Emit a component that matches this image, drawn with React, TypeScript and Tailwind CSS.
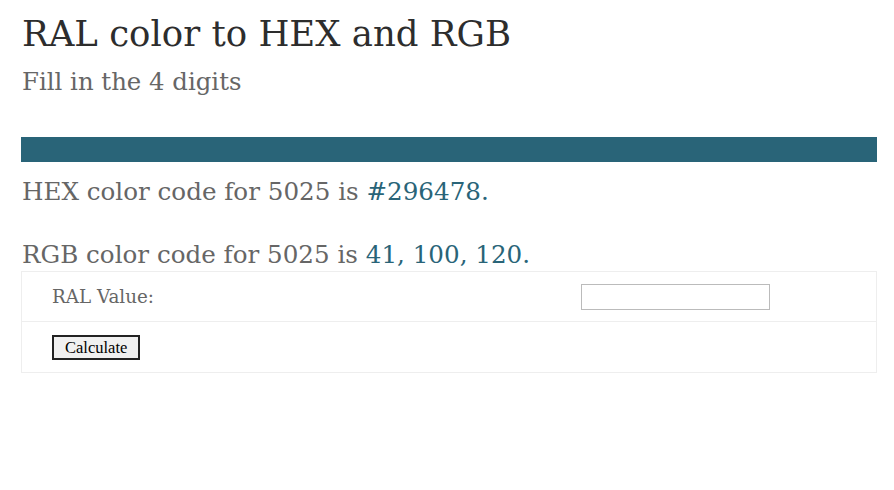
import React from "react";

export default function App() {
  return (
    <div className="w-[894px] h-[490px] bg-white" style={{ fontFamily: '"DejaVu Serif", Georgia, serif' }}>
      <div className="pl-[21px] pr-[17px] pt-[12px]">
        <h1 className="text-[35.5px] leading-[44px] text-[#2d2d2d] pl-[1px]">RAL color to HEX and RGB</h1>
        <p className="text-[24.4px] leading-[32px] text-[#666] pl-[1px] mt-[10px]">Fill in the 4 digits</p>
        <div className="h-[25px] bg-[#296478] mt-[39px]" />
        <p className="text-[24.6px] leading-[32px] text-[#666] pl-[1px] mt-[14px]">
          HEX color code for 5025 is <span className="text-[#296478]">#296478.</span>
        </p>
        <p className="text-[24.6px] leading-[32px] text-[#666] pl-[1px] mt-[31px]">
          RGB color code for 5025 is <span className="text-[#296478]">41, 100, 120.</span>
        </p>
        <div className="border border-[#eeeeee] w-[856px]">
          <div className="flex items-center h-[50px] border-b border-[#eeeeee]">
            <span className="pl-[30px] w-[559px] text-[18.3px] text-[#666]">RAL Value:</span>
            <input type="text" className="w-[189px] h-[26px] border border-[#bbbbbb] bg-white outline-none" />
          </div>
          <div className="flex items-center h-[50px] pl-[30px]">
            <button className="h-[25px] px-[11px] border-2 border-[#222] bg-[#f0f0f0] text-[16.5px] leading-[19px] text-black" style={{ fontFamily: '"Liberation Serif", serif' }}>
              Calculate
            </button>
          </div>
        </div>
      </div>
    </div>
  );
}
